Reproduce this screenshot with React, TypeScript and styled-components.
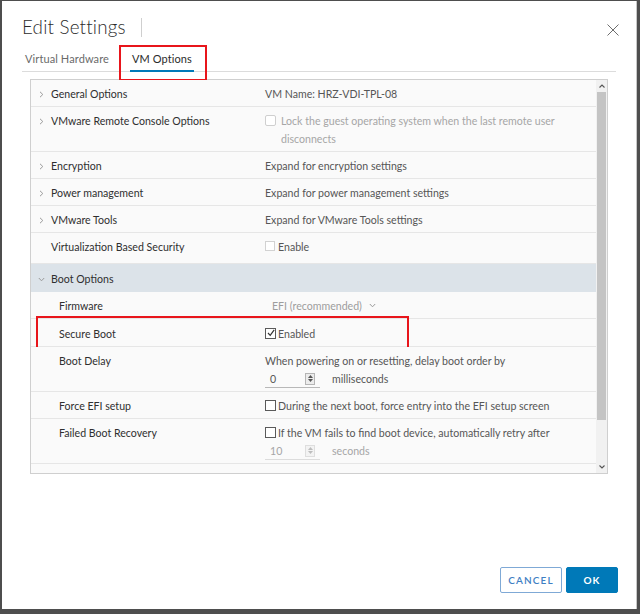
import React from "react";
import styled, { createGlobalStyle } from "styled-components";

const Global = createGlobalStyle`
  html, body { margin: 0; padding: 0; }
  body {
    background: #4e4e4e;
    font-family: Lato, "Noto Sans", "Liberation Sans", sans-serif;
    -webkit-font-smoothing: antialiased;
  }
  #root { width: 640px; height: 614px; }
`;

const Screen = styled.div`
  width: 640px;
  height: 614px;
  padding: 1px 0 0 2px;
  box-sizing: border-box;
`;

const Dialog = styled.div`
  width: 634px;
  height: 608px;
  background: #fff;
  box-shadow: 1px 0 0 #c8c8c8;
  display: flex;
  flex-direction: column;
  box-sizing: border-box;
`;

const Header = styled.div`
  display: flex;
  align-items: center;
  margin-top: 14px;
  padding: 0 17px 0 20px;
  height: 24px;
`;

const Title = styled.h1`
  margin: 0;
  font-size: 18.8px;
  font-weight: 300;
  color: #2b2b2b;
  line-height: 24px;
  letter-spacing: 0.2px;
`;

const TitleDivider = styled.span`
  width: 1px;
  height: 19px;
  background: #cfcfcf;
  margin-left: 15px;
`;

const CloseButton = styled.button`
  margin-left: auto;
  width: 12px;
  height: 12px;
  padding: 0;
  border: 0;
  background: none;
  display: flex;
  margin-top: 6px;
`;

const TabBar = styled.div`
  display: flex;
  margin: 8px 20px 0;
  height: 24px;
  border-bottom: 1px solid #dcdcdc;
  padding-left: 1px;
  gap: 19px;
`;

const Tab = styled.div<{ $active?: boolean }>`
  position: relative;
  padding: 3px 2px 0;
  line-height: 18px;
  font-size: 11px;
  color: ${(p) => (p.$active ? "#2b2b2b" : "#6a6a6a")};
  border-bottom: 2px solid ${(p) => (p.$active ? "#0079b8" : "transparent")};
  margin-bottom: -1px;
  box-sizing: border-box;
  height: 25px;
  letter-spacing: 0.1px;
`;

const Highlight = styled.span<{ $l: number; $t: number; $w: number; $h: number }>`
  position: absolute;
  left: ${(p) => p.$l}px;
  top: ${(p) => p.$t}px;
  width: ${(p) => p.$w}px;
  height: ${(p) => p.$h}px;
  border: 2px solid #e8151b;
  box-sizing: border-box;
  pointer-events: none;
`;

const Panel = styled.div`
  margin: 7px 28px 0;
  height: 395px;
  border: 1px solid #cfcfcf;
  display: grid;
  grid-template-columns: 1fr 11px;
  background: #fafafa;
  box-sizing: border-box;
`;

const Rows = styled.div`
  display: flex;
  flex-direction: column;
  overflow: hidden;
`;

const Row = styled.div<{ $pt?: number; $pb?: number; $header?: boolean }>`
  position: relative;
  display: grid;
  grid-template-columns: 234px 1fr;
  padding: ${(p) => p.$pt ?? 4}px 0 ${(p) => p.$pb ?? 4}px;
  border-bottom: 1px solid ${(p) => (p.$header ? "transparent" : "#e6e6e6")};
  background: ${(p) => (p.$header ? "#dce3e9" : "#fafafa")};
  line-height: 18px;
  font-size: 10.6px;
`;

const Label = styled.div<{ $sub?: boolean }>`
  display: flex;
  align-items: flex-start;
  padding-left: ${(p) => (p.$sub ? 28 : 7)}px;
  padding-top: 1px;
  margin-bottom: -1px;
  color: #2f2f2f;
`;

const ChevronSlot = styled.span`
  width: 13px;
  height: 18px;
  display: flex;
  align-items: center;
  flex-shrink: 0;
`;

const Value = styled.div<{ $muted?: boolean }>`
  color: ${(p) => (p.$muted ? "#a6a6a6" : "#565656")};
  padding-right: 20px;
  padding-top: 1px;
  margin-bottom: -1px;
`;

const Line = styled.div`
  display: flex;
  align-items: center;
  height: 18px;
`;

const CheckLine = styled.div`
  display: flex;
  align-items: flex-start;
`;

const Box = styled.span<{ $size: number; $color: string; $radius?: number; $gap: number }>`
  width: ${(p) => p.$size}px;
  height: ${(p) => p.$size}px;
  border: 1px solid ${(p) => p.$color};
  border-radius: ${(p) => p.$radius ?? 0}px;
  box-sizing: border-box;
  margin-right: ${(p) => p.$gap}px;
  margin-top: ${(p) => (18 - p.$size) / 2 - 1}px;
  flex-shrink: 0;
  display: flex;
  align-items: center;
  justify-content: center;
  background: #fff;
`;

const WrapText = styled.span`
  line-height: 18px;
`;

const SelectField = styled.div`
  display: flex;
  align-items: center;
  width: 117px;
  padding-left: 7px;
  box-sizing: border-box;
  color: #9d9d9d;
  gap: 7px;
  border-bottom: 1px solid #d6d6d6;
  margin-bottom: -5px;
  height: 23px;
  padding-bottom: 5px;
`;

const NumberField = styled.div<{ $muted?: boolean }>`
  display: flex;
  align-items: center;
  width: 55px;
  height: 18px;
  padding-left: 5px;
  box-sizing: border-box;
  border-bottom: 1px solid ${(p) => (p.$muted ? "#dcdcdc" : "#b8b8b8")};
  color: ${(p) => (p.$muted ? "#a6a6a6" : "#565656")};
`;

const NumText = styled.span`
  width: 35px;
`;

const Spinner = styled.span<{ $muted?: boolean }>`
  width: 10px;
  height: 12px;
  border: 1px solid ${(p) => (p.$muted ? "#dedede" : "#b5b5b5")};
  background: ${(p) => (p.$muted ? "#f3f3f3" : "#ececec")};
  box-sizing: border-box;
  display: flex;
  flex-direction: column;
  align-items: center;
  justify-content: center;
  gap: 1px;
`;

const Unit = styled.span<{ $muted?: boolean }>`
  margin-left: 12px;
  color: ${(p) => (p.$muted ? "#a6a6a6" : "#565656")};
`;

const Filler = styled.div`
  flex: 1;
  background: #fafafa;
`;

const Scrollbar = styled.div`
  display: flex;
  flex-direction: column;
  background: #f1f1f1;
`;

const ScrollButton = styled.div`
  height: 12px;
  display: flex;
  align-items: center;
  justify-content: center;
`;

const Thumb = styled.div`
  height: 328px;
  margin: 0 1px;
  background: #c4c4c4;
`;

const Track = styled.div`
  flex: 1;
`;

const Footer = styled.div`
  margin-top: auto;
  display: flex;
  justify-content: flex-end;
  gap: 4px;
  padding: 0 18px 16px 0;
`;

const Button = styled.button<{ $primary?: boolean }>`
  height: 26px;
  padding: 0;
  width: ${(p) => (p.$primary ? 52 : 62)}px;
  border-radius: 2px;
  border: 1px solid ${(p) => (p.$primary ? "#0079b8" : "#7fa9d6")};
  background: ${(p) => (p.$primary ? "#0079b8" : "#fff")};
  color: ${(p) => (p.$primary ? "#fff" : "#3f7fc4")};
  font-family: Lato, "Noto Sans", sans-serif;
  font-weight: ${(p) => (p.$primary ? 700 : 600)};
  font-size: 10px;
  letter-spacing: 1.1px;
`;

const Chevron = ({ down }: { down?: boolean }) => (
  <svg width="7" height="7" viewBox="0 0 7 7">
    {down ? (
      <polyline points="0.8,2 3.5,4.8 6.2,2" fill="none" stroke="#9a9a9a" strokeWidth="1" />
    ) : (
      <polyline points="2,0.8 4.8,3.5 2,6.2" fill="none" stroke="#9a9a9a" strokeWidth="1" />
    )}
  </svg>
);

const Check = () => (
  <svg width="8" height="8" viewBox="0 0 8 8">
    <polyline points="1,4 3.2,6.3 7.2,0.8" fill="none" stroke="#333" strokeWidth="1.2" />
  </svg>
);

const Arrows = ({ color }: { color: string }) => (
  <>
    <svg width="5" height="3" viewBox="0 0 5 3">
      <polygon points="0,3 2.5,0 5,3" fill={color} />
    </svg>
    <svg width="5" height="3" viewBox="0 0 5 3">
      <polygon points="0,0 2.5,3 5,0" fill={color} />
    </svg>
  </>
);

type RowDef = {
  label: string;
  chevron?: "right" | "down" | "none";
  sub?: boolean;
  pt?: number;
  pb?: number;
  header?: boolean;
  value?: React.ReactNode;
  muted?: boolean;
  highlight?: boolean;
};

const rows: RowDef[] = [
  { label: "General Options", chevron: "right", value: "VM Name: HRZ-VDI-TPL-08" },
  {
    label: "VMware Remote Console Options",
    chevron: "right",
    muted: true,
    value: (
      <CheckLine>
        <Box $size={11} $color="#cfcfcf" $radius={2} $gap={5} />
        <WrapText>
          Lock the guest operating system when the last remote user
          <br />
          disconnects
        </WrapText>
      </CheckLine>
    ),
  },
  { label: "Encryption", chevron: "right", value: "Expand for encryption settings" },
  { label: "Power management", chevron: "right", value: "Expand for power management settings" },
  { label: "VMware Tools", chevron: "right", value: "Expand for VMware Tools settings" },
  {
    label: "Virtualization Based Security",
    chevron: "none",
    pb: 8,
    value: (
      <CheckLine>
        <Box $size={10} $color="#d2d2d2" $gap={3} />
        <span>Enable</span>
      </CheckLine>
    ),
  },
  { label: "Boot Options", chevron: "down", header: true, pt: 5 },
  {
    label: "Firmware",
    sub: true,
    value: (
      <SelectField>
        EFI (recommended)
        <Chevron down />
      </SelectField>
    ),
  },
  {
    label: "Secure Boot",
    sub: true,
    pt: 5,
    highlight: true,
    value: (
      <CheckLine>
        <Box $size={11} $color="#5a5a5a" $gap={2}>
          <Check />
        </Box>
        <span>Enabled</span>
      </CheckLine>
    ),
  },
  {
    label: "Boot Delay",
    sub: true,
    value: (
      <>
        <Line>When powering on or resetting, delay boot order by</Line>
        <Line>
          <NumberField>
            <NumText>0</NumText>
            <Spinner>
              <Arrows color="#555" />
            </Spinner>
          </NumberField>
          <Unit>milliseconds</Unit>
        </Line>
      </>
    ),
  },
  {
    label: "Force EFI setup",
    sub: true,
    value: (
      <CheckLine>
        <Box $size={11} $color="#5a5a5a" $gap={2} />
        <span>During the next boot, force entry into the EFI setup screen</span>
      </CheckLine>
    ),
  },
  {
    label: "Failed Boot Recovery",
    sub: true,
    value: (
      <>
        <CheckLine>
          <Box $size={11} $color="#5a5a5a" $gap={2} />
          <span>If the VM fails to find boot device, automatically retry after</span>
        </CheckLine>
        <Line>
          <NumberField $muted>
            <NumText>10</NumText>
            <Spinner $muted>
              <Arrows color="#bdbdbd" />
            </Spinner>
          </NumberField>
          <Unit $muted>seconds</Unit>
        </Line>
      </>
    ),
  },
];

export default function App() {
  return (
    <Screen>
      <Global />
      <Dialog>
        <Header>
          <Title>Edit Settings</Title>
          <TitleDivider />
          <CloseButton aria-label="Close">
            <svg width="12" height="12" viewBox="0 0 12 12">
              <line x1="0.5" y1="0.5" x2="11.5" y2="11.5" stroke="#6d6d6d" strokeWidth="1" />
              <line x1="11.5" y1="0.5" x2="0.5" y2="11.5" stroke="#6d6d6d" strokeWidth="1" />
            </svg>
          </CloseButton>
        </Header>
        <TabBar>
          <Tab>Virtual Hardware</Tab>
          <Tab $active>
            VM Options
            <Highlight $l={-11} $t={-2} $w={88} $h={36} />
          </Tab>
        </TabBar>
        <Panel>
          <Rows>
            {rows.map((r) => (
              <Row key={r.label} $pt={r.pt} $pb={r.pb} $header={r.header}>
                <Label $sub={r.sub}>
                  {!r.sub && (
                    <ChevronSlot>
                      {r.chevron === "right" && <Chevron />}
                      {r.chevron === "down" && <Chevron down />}
                    </ChevronSlot>
                  )}
                  {r.label}
                </Label>
                <Value $muted={r.muted}>{r.value}</Value>
                {r.highlight && <Highlight $l={5} $t={-3} $w={373} $h={33} />}
              </Row>
            ))}
            <Filler />
          </Rows>
          <Scrollbar>
            <ScrollButton>
              <svg width="6" height="4" viewBox="0 0 6 4">
                <polyline points="0.5,3.5 3,1 5.5,3.5" fill="none" stroke="#555" strokeWidth="1.1" />
              </svg>
            </ScrollButton>
            <Thumb />
            <Track />
            <ScrollButton>
              <svg width="6" height="4" viewBox="0 0 6 4">
                <polyline points="0.5,0.5 3,3 5.5,0.5" fill="none" stroke="#555" strokeWidth="1.1" />
              </svg>
            </ScrollButton>
          </Scrollbar>
        </Panel>
        <Footer>
          <Button>CANCEL</Button>
          <Button $primary>OK</Button>
        </Footer>
      </Dialog>
    </Screen>
  );
}
